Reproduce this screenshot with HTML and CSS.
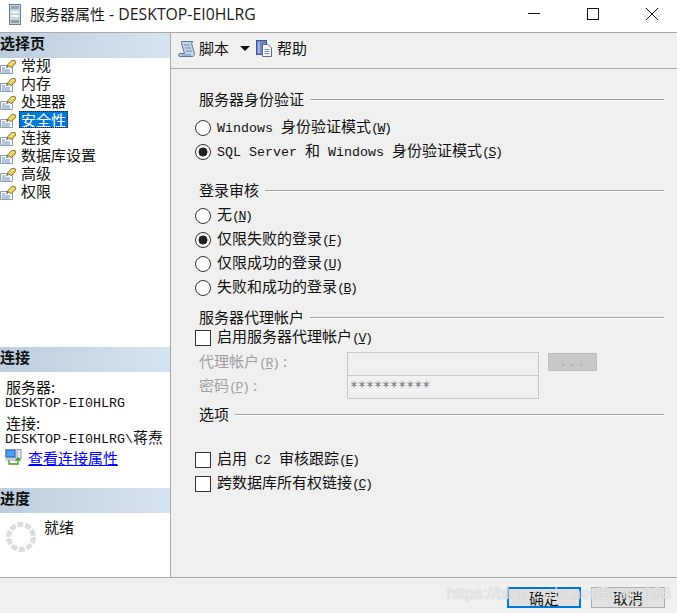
FILE: index.html
```html
<!DOCTYPE html>
<html lang="zh">
<head>
<meta charset="utf-8">
<title>服务器属性</title>
<link rel="stylesheet" href="styles.css">
</head>
<body>
<svg class="defs" width="0" height="0">
  <symbol id="page" viewBox="0 0 16 16">
    <path d="M.5 6.500h12v8H.500z" fill="#f6f8fb" stroke="#8e9cac"/>
    <path d="M2 9h3M2 11h8M2 13h8" stroke="#6f93c2"/>
    <path d="M7 6.500 11.500 1.500h3.500l1 2.500-4.500 4.500z" fill="#e9c94c" stroke="#6b6636" stroke-width=".8"/>
    <path d="M9.500 6 12 3h2" stroke="#fbf0ae" fill="none"/>
    <path d="M7 6.500 6 9l2.500-.8z" fill="#5d5d45"/>
  </symbol>
</svg>
<div class="titlebar">
  <svg class="appicon" width="12" height="21" viewBox="0 0 12 21">
    <rect x=".5" y=".5" width="11" height="20" fill="#c9d5e2" stroke="#6d7c8c"/>
    <rect x="2" y="2" width="8" height="3" fill="#8ea4ba"/>
    <rect x="2" y="7" width="8" height="2" fill="#f2f5f8"/>
    <rect x="2" y="11" width="8" height="2" fill="#f2f5f8"/>
    <rect x="2" y="16" width="8" height="3" fill="#94a08f"/>
  </svg>
  <span class="wintitle">服务器属性<span class="wl"> - DESKTOP-EI0HLRG</span></span>
  <div class="winbtns">
    <svg width="14" height="14" viewBox="0 0 14 14"><path d="M1 6.500h12" stroke="#111" fill="none"/></svg>
    <svg width="14" height="14" viewBox="0 0 14 14"><rect x="1.500" y="1.500" width="11" height="11" stroke="#111" fill="none"/></svg>
    <svg width="14" height="14" viewBox="0 0 14 14"><path d="M1 1l12 12M13 1 1 13" stroke="#111" fill="none"/></svg>
  </div>
</div>
<div class="body">
  <aside class="side">
    <div class="head">选择页</div>
    <ul class="nav">
      <li><svg class="ni"><use href="#page"/></svg><span>常规</span></li>
      <li><svg class="ni"><use href="#page"/></svg><span>内存</span></li>
      <li><svg class="ni"><use href="#page"/></svg><span>处理器</span></li>
      <li><svg class="ni"><use href="#page"/></svg><span class="sel">安全性</span></li>
      <li><svg class="ni"><use href="#page"/></svg><span>连接</span></li>
      <li><svg class="ni"><use href="#page"/></svg><span>数据库设置</span></li>
      <li><svg class="ni"><use href="#page"/></svg><span>高级</span></li>
      <li><svg class="ni"><use href="#page"/></svg><span>权限</span></li>
    </ul>
    <div class="head">连接</div>
    <div class="conn">
      <div class="cl">服务器:</div>
      <div class="cv">DESKTOP-EI0HLRG</div>
      <div class="cl">连接:</div>
      <div class="cv cv2">DESKTOP-EI0HLRG\<span class="cjk">蒋焘</span></div>
      <div class="clink">
        <svg width="17" height="16" viewBox="0 0 17 16">
          <rect x=".5" y=".5" width="10" height="8" fill="#2f7be0" stroke="#8a97a8"/>
          <rect x="2" y="2" width="7" height="5" fill="#4aa0f5"/>
          <rect x="12" y=".5" width="4" height="9" fill="#e8ecf0" stroke="#8a97a8"/>
          <rect x=".5" y="9" width="11" height="3" fill="#c8ced6"/>
          <path d="M4 11v4h9V11M10.500 12l2.500-3 2.500 3" fill="none" stroke="#3f9a1c" stroke-width="1.300"/>
        </svg>
        <a href="#">查看连接属性</a>
      </div>
    </div>
    <div class="head">进度</div>
    <div class="prog">
      <svg width="30" height="30" viewBox="0 0 30 30">
        <circle cx="15" cy="15" r="12.500" fill="none" stroke="#dcdcdc" stroke-width="5" stroke-dasharray="6 1.850"/>
      </svg>
      <span>就绪</span>
    </div>
  </aside>
  <main class="main">
    <div class="toolbar">
      <svg width="18" height="18" viewBox="0 0 18 18">
        <path d="M3.500 1.500H15c-1.500 .5-1.500 2-1 3.500l2.500 8.500c.3 1.500-.5 3-2 3H2c-1.800 0-1.800-3 0-3h4.500L4 5c-.4-1.500-.5-2.500-.5-3.500z" fill="#c3d4e8" stroke="#5b7897"/>
        <path d="M6 5h6M7 8h6M8 11h6M4 15h9" stroke="#6f8cab"/>
      </svg>
      <span class="tb">脚本</span>
      <svg class="caret" width="10" height="5" viewBox="0 0 10 5"><path d="M0 0h10L5 5z" fill="#111"/></svg>
      <svg width="17" height="17" viewBox="0 0 17 17">
        <rect x=".5" y=".5" width="10" height="14" fill="#6d86c4" stroke="#47598c"/>
        <rect x="2" y="2" width="2" height="11" fill="#9fb2e0"/>
        <path d="M6.500 4.500h5.500l3.500 3.500v8.500h-9z" fill="#f4f6f9" stroke="#5f6f82"/>
        <path d="M8.500 9.500h5M8.500 11.500h5M8.500 13.500h5" stroke="#7d8a9a"/>
      </svg>
      <span class="tb help">帮助</span>
    </div>
    <div class="form">
      <div class="sec s1"><span>服务器身份验证</span><i></i></div>
      <div class="opt o1"><b class="radio"></b><span><span class="lat">Windows </span>身份验证模式<span class="par">(<u>W</u>)</span></span></div>
      <div class="opt"><b class="radio on"></b><span><span class="lat">SQL Server </span>和<span class="lat"> Windows </span>身份验证模式<span class="par">(<u>S</u>)</span></span></div>
      <div class="sec s2"><span>登录审核</span><i></i></div>
      <div class="opt o3"><b class="radio"></b><span>无<span class="par">(<u>N</u>)</span></span></div>
      <div class="opt"><b class="radio on"></b><span>仅限失败的登录<span class="par">(<u>F</u>)</span></span></div>
      <div class="opt"><b class="radio"></b><span>仅限成功的登录<span class="par">(<u>U</u>)</span></span></div>
      <div class="opt"><b class="radio"></b><span>失败和成功的登录<span class="par">(<u>B</u>)</span></span></div>
      <div class="sec s3"><span>服务器代理帐户</span><i></i></div>
      <div class="opt o4"><b class="check"></b><span>启用服务器代理帐户<span class="par">(<u>V</u>)</span></span></div>
      <div class="fields">
        <div class="field f1"><label>代理帐户<span class="par">(<u>R</u>)</span> :</label><div class="inp"></div><div class="dots">...</div></div>
        <div class="field f2"><label>密码<span class="par">(<u>P</u>)</span> :</label><div class="inp pw">**********</div></div>
      </div>
      <div class="sec s4"><span>选项</span><i></i></div>
      <div class="opt o5"><b class="check"></b><span>启用<span class="lat"> C2 </span>审核跟踪<span class="par">(<u>E</u>)</span></span></div>
      <div class="opt"><b class="check"></b><span>跨数据库所有权链接<span class="par">(<u>C</u>)</span></span></div>
    </div>
  </main>
</div>
<footer class="foot">
  <button class="btn ok">确定</button>
  <button class="btn">取消</button>
  <span class="wm">https://blog.csdn.net/Bear_136</span>
</footer>
</body>
</html>
```
FILE: styles.css
```css
* { box-sizing: border-box; }
html, body { margin: 0; height: 613px; overflow: hidden; }
body {
  width: 677px;
  background: #f0f0f0;
  color: #111;
  font: 15px/18px "Noto Sans CJK SC", "Liberation Sans", sans-serif;
  display: flex;
  flex-direction: column;
}
.defs { position: absolute; }
.lat { font-family: "Liberation Mono", monospace; font-size: 13.33px; white-space: pre; }
.par { font-family: "Liberation Mono", monospace; font-size: 13.33px; letter-spacing: -1.5px; margin-right: 1px; }
.cjk { font-family: "Noto Sans CJK SC", sans-serif; font-size: 15px; }

.titlebar {
  height: 33px;
  flex: none;
  background: #fff;
  border-bottom: 1px solid #a9a9a9;
  display: flex;
  align-items: center;
  padding: 0 0 4px 9px;
}
.appicon { margin-right: 9px; }
.wintitle { font: 15px/20px "Noto Sans CJK SC", "Open Sans", sans-serif; color: #1a1a1a; }
.wl { font-family: "Open Sans", sans-serif; font-size: 15.8px; white-space: pre; }
.winbtns { margin-left: auto; margin-right: 18px; display: flex; gap: 45px; }
.winbtns svg { display: block; }

.body { flex: 1; display: flex; min-height: 0; }

.side {
  width: 171px;
  flex: none;
  background: #fff;
  border-right: 1px solid #a9a9a9;
  display: flex;
  flex-direction: column;
}
.head {
  height: 25px;
  flex: none;
  font-weight: 700;
  line-height: 20px;
  background: linear-gradient(90deg, #bdcddd, #d6e4f1);
}
.nav { list-style: none; margin: 0; padding: 0; height: 289px; flex: none; }
.nav li { height: 18px; display: flex; align-items: center; white-space: nowrap; }
.ni { width: 16px; height: 16px; flex: none; margin-right: 5px; }
.nav li span { margin-top: -5px; }
.nav li .sel {
  background: #0078d7;
  color: #fff;
  outline: 1px dotted #1d1d1d;
  outline-offset: -1px;
  padding: 0 2px;
  margin-left: -2px;
  margin-top: -3px;
  height: 17px;
  line-height: 17px;
}
.conn { height: 116px; flex: none; padding: 6px 0 0 5px; }
.cl { height: 18px; line-height: 18px; padding-left: 1px; }
.cv { height: 18px; line-height: 16px; font-family: "Liberation Mono", monospace; font-size: 13.33px; white-space: nowrap; }
.cv2 { margin-top: -3px; }
.cv .cjk { line-height: 16px; }
.clink { display: flex; align-items: center; gap: 6px; height: 20px; }
.clink a { color: #0000ff; margin-top: 2px; }
.prog { flex: 1; padding: 5px 0 0 5px; display: flex; gap: 8px; align-items: flex-start; }
.prog svg { margin-top: 4px; margin-left: 1px; }

.main { flex: 1; display: flex; flex-direction: column; min-width: 0; }
.toolbar {
  height: 36px;
  flex: none;
  border-bottom: 1px solid #a9a9a9;
  display: flex;
  align-items: center;
  padding: 0 0 4px 7px;
}
.tb { margin-left: 3px; margin-top: -1px; }
.help { margin-left: 4px; }
.caret { margin: 0 6px 0 11px; }

.form { padding: 22px 13px 0 24px; }
.sec { display: flex; align-items: center; height: 18px; padding-left: 4px; }
.sec > span { margin-top: -2px; }
.sec i { flex: 1; height: 2px; background: linear-gradient(#a0a0a0 50%, #fff 50%); margin-left: 6px; }
.s2 { margin-top: 18px; }
.s3 { margin-top: 9px; }
.s4 { margin-top: 7px; }
.opt { display: flex; align-items: center; height: 24px; white-space: nowrap; }
.opt > span { margin-left: 6px; margin-top: -2px; }
.o1 { margin-top: 7px; }
.o3 { margin-top: 4px; }
.o4 { margin-top: -1px; }
.o5 { margin-top: 24px; }
.radio {
  width: 16px; height: 16px; flex: none;
  border: 1px solid #333;
  border-radius: 50%;
  background: #fff;
}
.radio.on { background: radial-gradient(circle, #222 0 4.200px, #fff 4.800px); }
.check { width: 16px; height: 16px; flex: none; border: 1px solid #333; background: #fff; }

.fields { margin-top: 2px; }
.field { display: flex; color: #a0a0a0; }
.f1 { height: 24px; }
.f2 { height: 23px; }
.field label { width: 152px; padding-left: 4px; line-height: 17px; white-space: nowrap; }
.inp { width: 192px; border: 1px solid #c8c8c8; background: #f0f0f0; }
.f2 .inp { border-top: 0; }
.pw { font-family: "DejaVu Sans Mono", monospace; font-size: 13.33px; line-height: 22px; padding-left: 2px; color: #6a6a6a; }
.dots {
  width: 49px; height: 18px; margin: 1px 0 0 9px;
  background: #c8c8c8;
  border: 1px solid #bdbdbd;
  color: #a8a8a8;
  text-align: center;
  font: 13.33px/18px "Liberation Mono", monospace;
  letter-spacing: 1px;
}

.foot {
  height: 36px;
  flex: none;
  border-top: 1px solid #a9a9a9;
  position: relative;
  display: flex;
  justify-content: flex-end;
  gap: 10px;
  padding: 9px 12px 0 0;
}
.btn {
  width: 74px; height: 21px;
  background: #e1e1e1;
  border: 1px solid #adadad;
  color: #111;
  padding: 0;
  font: 15px/18px "Noto Sans CJK SC", sans-serif;
}
.ok { border: 2px solid #0078d7; }
.wm {
  position: absolute;
  left: 447px; top: 5px;
  color: rgba(255,255,255,.75);
  text-shadow: 0 0 1px rgba(110,110,110,.55);
  font: 16.5px/20px "Liberation Sans", sans-serif;
  white-space: nowrap;
}
```
